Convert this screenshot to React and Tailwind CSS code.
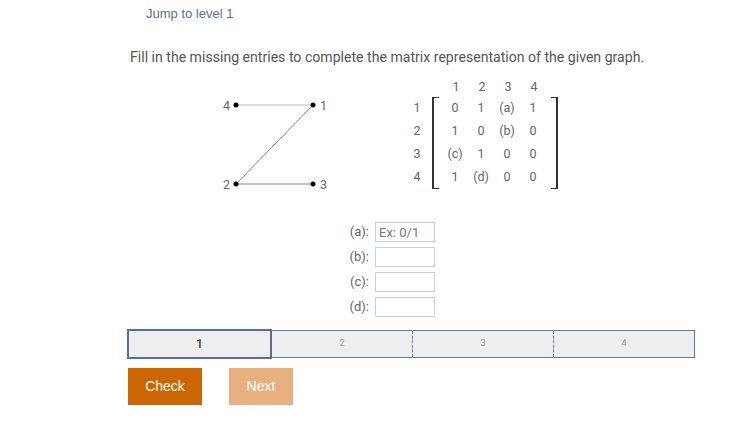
import React from 'react';

const matrix = [
    ['0', '1', '(a)', '1'],
    ['1', '0', '(b)', '0'],
    ['(c)', '1', '0', '0'],
    ['1', '(d)', '0', '0'],
];

const Graph = () => (
    <svg width="120" height="105" viewBox="0 0 120 105" className="block">
        <line x1="21" y1="13" x2="98" y2="13" stroke="#bdbdbd" strokeWidth="1" />
        <line x1="98" y1="13" x2="21" y2="92" stroke="#555" strokeWidth="0.7" />
        <line x1="21" y1="92" x2="98" y2="92" stroke="#c4c4c4" strokeWidth="2" />
        <circle cx="21" cy="13" r="2.5" fill="#000" />
        <circle cx="98" cy="13" r="2.5" fill="#000" />
        <circle cx="21" cy="92" r="2.5" fill="#000" />
        <circle cx="98" cy="92" r="2.5" fill="#000" />
        <g fill="#666" fontSize="12.5" fontFamily="Roboto, sans-serif">
            <text x="15" y="17.5" textAnchor="end">4</text>
            <text x="105" y="17.5">1</text>
            <text x="15" y="96.5" textAnchor="end">2</text>
            <text x="105" y="96.5">3</text>
        </g>
    </svg>
);

const Matrix = () => (
    <div className="text-[12.5px] text-[#666]">
        {/* Column headers */}
        <div className="flex h-[20px] items-center pl-[38px]">
            {['1', '2', '3', '4'].map((c) => (
                <div key={c} className="w-[26px] text-center">{c}</div>
            ))}
        </div>
        <div className="flex">
            <div className="flex w-[24px] flex-col">
                {['1', '2', '3', '4'].map((r) => (
                    <div key={r} className="flex h-[23px] items-center justify-center">{r}</div>
                ))}
            </div>
            <div className="ml-[3px] mr-[3px] h-[92px] w-[7px] border-y border-l-2 border-[#333]" />
            <div className="flex flex-col">
                {matrix.map((row, i) => (
                    <div key={i} className="flex h-[23px] items-center">
                        {row.map((v, j) => (
                            <div key={j} className="w-[26px] text-center">{v}</div>
                        ))}
                    </div>
                ))}
            </div>
            <div className="ml-[5px] h-[92px] w-[7px] border-y border-r-2 border-[#333]" />
        </div>
    </div>
);

const App = () => {
    const fields = ['a', 'b', 'c', 'd'];
    const levels = ['1', '2', '3', '4'];

    return (
        <div className="min-h-screen bg-white" style={{ fontFamily: 'Roboto, sans-serif' }}>
            <div className="pl-[128px] pt-[6px]">
                {/* Jump link */}
                <div className="ml-[18px] h-[16px] text-[13px] leading-[16px] text-[#5a7191]" style={{ fontFamily: '"Liberation Sans", Arial, sans-serif' }}>
                    Jump to level 1
                </div>

                {/* Prompt */}
                <p className="ml-[2px] mt-[25px] h-[20px] text-[14.1px] leading-[20px] text-[#555]">
                    Fill in the missing entries to complete the matrix representation of the given graph.
                </p>

                {/* Graph + matrix */}
                <div className="mt-[10px] flex h-[120px] items-start">
                    <div className="ml-[87px] mt-[15px]">
                        <Graph />
                    </div>
                    <div className="ml-[70px]">
                        <Matrix />
                    </div>
                </div>

                {/* Inputs */}
                <div className="ml-[206px] mt-[25px] flex flex-col gap-[5px]">
                    {fields.map((f) => (
                        <div key={f} className="flex h-[20px] items-center">
                            <label className="w-[41px] pr-[6px] text-right text-[13px] text-[#666]">({f}):</label>
                            <input
                                className="h-[20px] w-[60px] border border-[#c9d1d9] px-[3px] text-[13px] text-[#555] outline-none placeholder:text-[#777]"
                                placeholder={f === 'a' ? 'Ex: 0/1' : ''}
                            />
                        </div>
                    ))}
                </div>

                {/* Level progress */}
                <div className="mt-[13px] flex h-[28px] w-[567px] border border-[#5b7ba2] bg-[#eeeeee]">
                    {levels.map((l, i) => (
                        <div
                            key={l}
                            className={
                                i === 0
                                    ? '-my-[2px] -ml-[2px] flex w-[145px] items-center justify-center border-2 border-[#5a6e8f] text-[12px] font-bold text-[#555]'
                                    : i === 1
                                    ? 'flex flex-1 items-center justify-center text-[9px] text-[#999]'
                                    : 'flex flex-1 items-center justify-center border-l border-dashed border-[#5b7ba2] text-[9px] text-[#999]'
                            }
                        >
                            {l}
                        </div>
                    ))}
                </div>

                {/* Buttons */}
                <div className="mt-[10px] flex gap-[27px]" style={{ fontFamily: '"Liberation Sans", Arial, sans-serif' }}>
                    <button className="h-[37px] w-[74px] bg-[#cc6600] text-[14px] text-white">Check</button>
                    <button className="h-[37px] w-[64px] bg-[#e8b07f] text-[14px] text-white">Next</button>
                </div>
            </div>
        </div>
    );
};

export default App;
